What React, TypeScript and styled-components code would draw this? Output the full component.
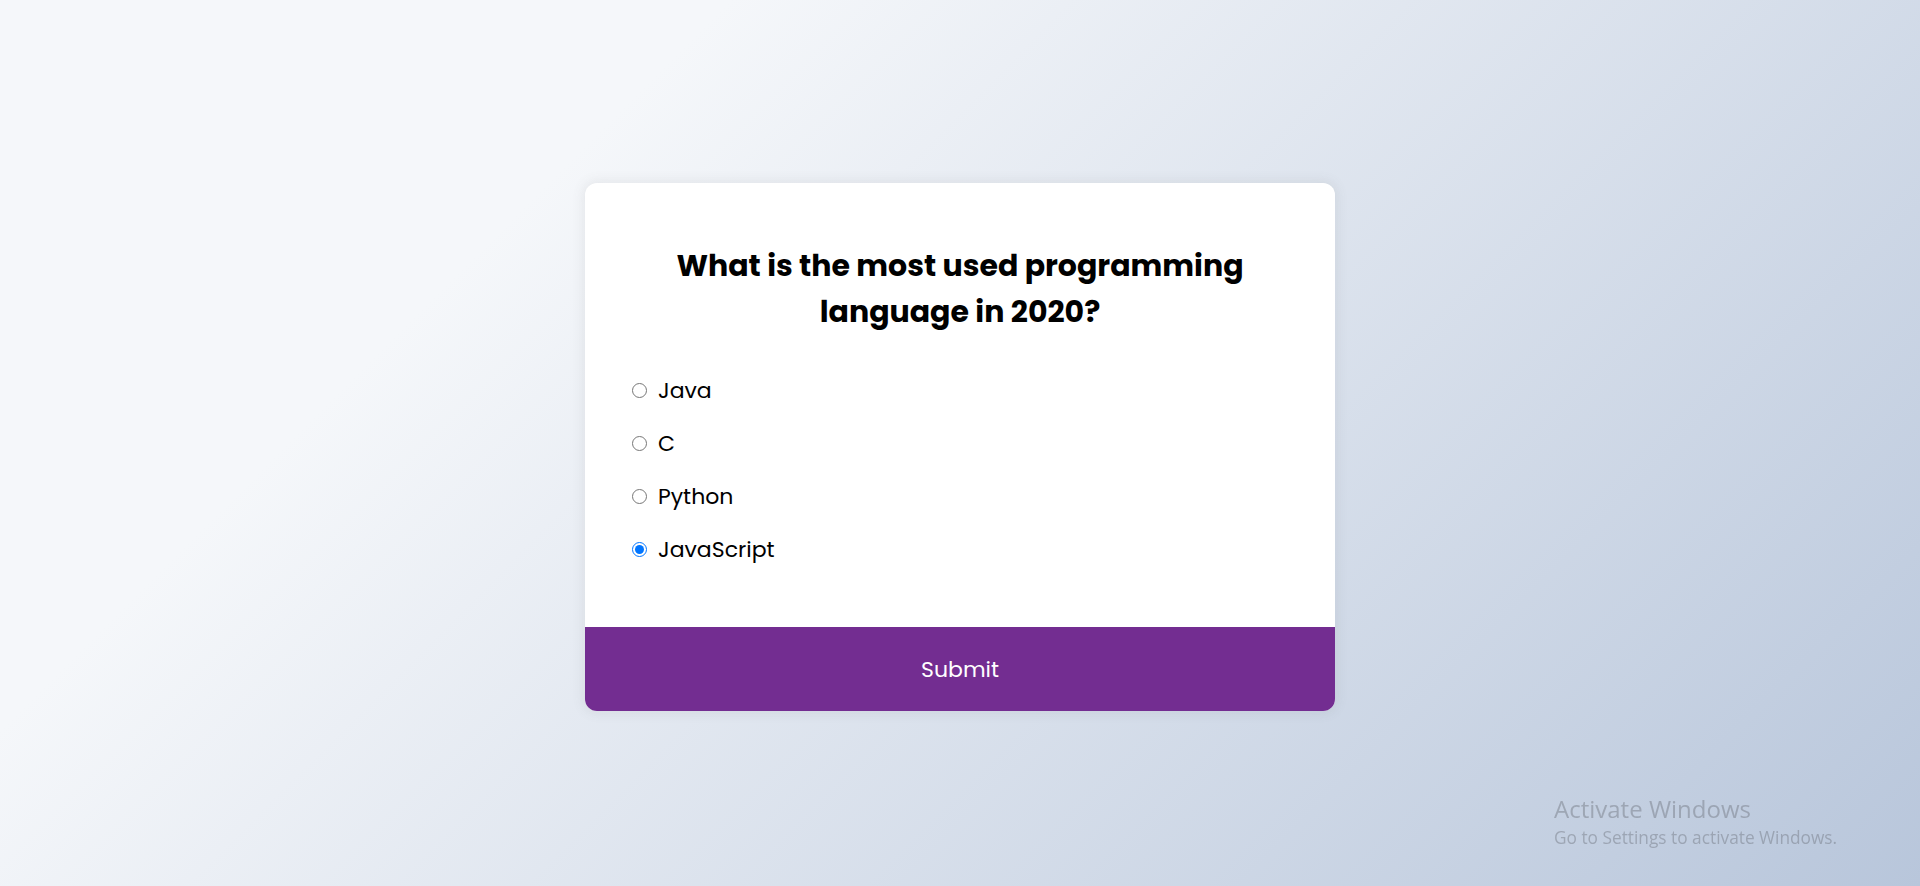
import { useState } from "react";
import styled, { createGlobalStyle } from "styled-components";

const GlobalStyle = createGlobalStyle`
  html, body {
    margin: 0;
    padding: 0;
  }
  body {
    background-color: #b8c6db;
    background-image: linear-gradient(315deg, #b8c6db 0%, #f5f7fa 74%);
    font-family: "Poppins", "Inter", "Noto Sans", sans-serif;
    height: 100vh;
    overflow: hidden;
  }
`;

const Page = styled.div`
  box-sizing: border-box;
  height: 100vh;
  padding-top: 8px;
  display: flex;
  align-items: center;
  justify-content: center;
`;

const Card = styled.div`
  width: 750px;
  background-color: #fff;
  border-radius: 12px;
  box-shadow: 0 0 12px 2px rgba(100, 100, 100, 0.1);
  overflow: hidden;
`;

const Header = styled.div`
  padding: 40px;
`;

const Question = styled.h2`
  margin: 0;
  padding: 20px 20px;
  text-align: center;
  font-size: 30px;
  line-height: 46px;
  font-weight: 700;
  color: #000;
`;

const Options = styled.ul`
  list-style: none;
  margin: 17px 0 20px;
  padding: 0;
  display: flex;
  flex-direction: column;
  gap: 17px;
`;

const Option = styled.li`
  height: 36px;
  display: flex;
  align-items: center;
  font-size: 22px;
  color: #000;
`;

const Label = styled.label`
  display: flex;
  align-items: center;
  gap: 11px;
  cursor: pointer;
`;

const Radio = styled.input`
  width: 15px;
  height: 15px;
  margin: 0 0 0 7px;
  cursor: pointer;
`;

const Submit = styled.button`
  display: block;
  width: 100%;
  height: 84px;
  border: none;
  background-color: #732d91;
  color: #fff;
  font-family: inherit;
  font-size: 22px;
  cursor: pointer;
`;

const Watermark = styled.div`
  position: fixed;
  left: 1554px;
  bottom: 36px;
  font-family: "Open Sans", "Noto Sans", sans-serif;
  color: rgba(105, 110, 120, 0.42);
  pointer-events: none;
`;

const WatermarkTitle = styled.div`
  font-size: 24px;
  line-height: 30px;
  margin-bottom: 2px;
`;

const WatermarkText = styled.div`
  font-size: 17.3px;
  line-height: 24px;
`;

const answers = ["Java", "C", "Python", "JavaScript"];

export default function App() {
  const [picked, setPicked] = useState("JavaScript");

  return (
    <>
      <GlobalStyle />
      <Page>
        <Card>
          <Header>
            <Question>What is the most used programming language in 2020?</Question>
            <Options>
              {answers.map((a) => (
                <Option key={a}>
                  <Label>
                    <Radio
                      type="radio"
                      name="answer"
                      checked={picked === a}
                      onChange={() => setPicked(a)}
                    />
                    {a}
                  </Label>
                </Option>
              ))}
            </Options>
          </Header>
          <Submit>Submit</Submit>
        </Card>
      </Page>
      <Watermark>
        <WatermarkTitle>Activate Windows</WatermarkTitle>
        <WatermarkText>Go to Settings to activate Windows.</WatermarkText>
      </Watermark>
    </>
  );
}
